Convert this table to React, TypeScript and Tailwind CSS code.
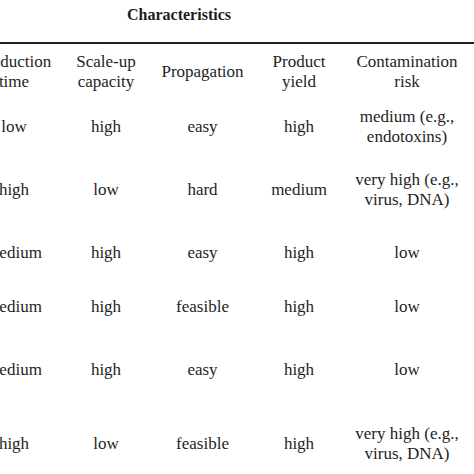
import React from "react";

const cols = "grid grid-cols-[88px_96px_97px_96px_120px] ml-[-30px]";

type Row = { h: string; cells: React.ReactNode[] };

const rows: Row[] = [
  { h: "h-[54px]", cells: ["low", "high", "easy", "high", <>medium (e.g.,<br />endotoxins)</>] },
  { h: "h-[71px]", cells: ["high", "low", "hard", "medium", <>very high (e.g.,<br />virus, DNA)</>] },
  { h: "h-[56px]", cells: ["medium", "high", "easy", "high", "low"] },
  { h: "h-[52px]", cells: ["medium", "high", "feasible", "high", "low"] },
  { h: "h-[74px]", cells: ["medium", "high", "easy", "high", "low"] },
  { h: "h-[74px]", cells: ["high", "low", "feasible", "high", <>very high (e.g.,<br />virus, DNA)</>] },
];

export default function App() {
  return (
    <div className="w-[474px] h-[474px] overflow-hidden bg-white text-[#1e1e1e] text-[17px] leading-[20px] font-['Liberation_Serif',serif]">
      <div className="h-[30px] pt-[5px] pr-[116px] text-center font-bold text-[16px]">Characteristics</div>
      <div className="h-[12px]" />
      <div className="h-[2px] bg-[#222]" />
      <div className={`${cols} h-[56px] items-center text-center`}>
        <div>Production<br />time</div>
        <div>Scale-up<br />capacity</div>
        <div>Propagation</div>
        <div>Product<br />yield</div>
        <div>Contamination<br />risk</div>
      </div>
      {rows.map((r, i) => (
        <div key={i} className={`${cols} ${r.h} items-center text-center`}>
          {r.cells.map((c, j) => (
            <div key={j} className="whitespace-nowrap">{c}</div>
          ))}
        </div>
      ))}
    </div>
  );
}
